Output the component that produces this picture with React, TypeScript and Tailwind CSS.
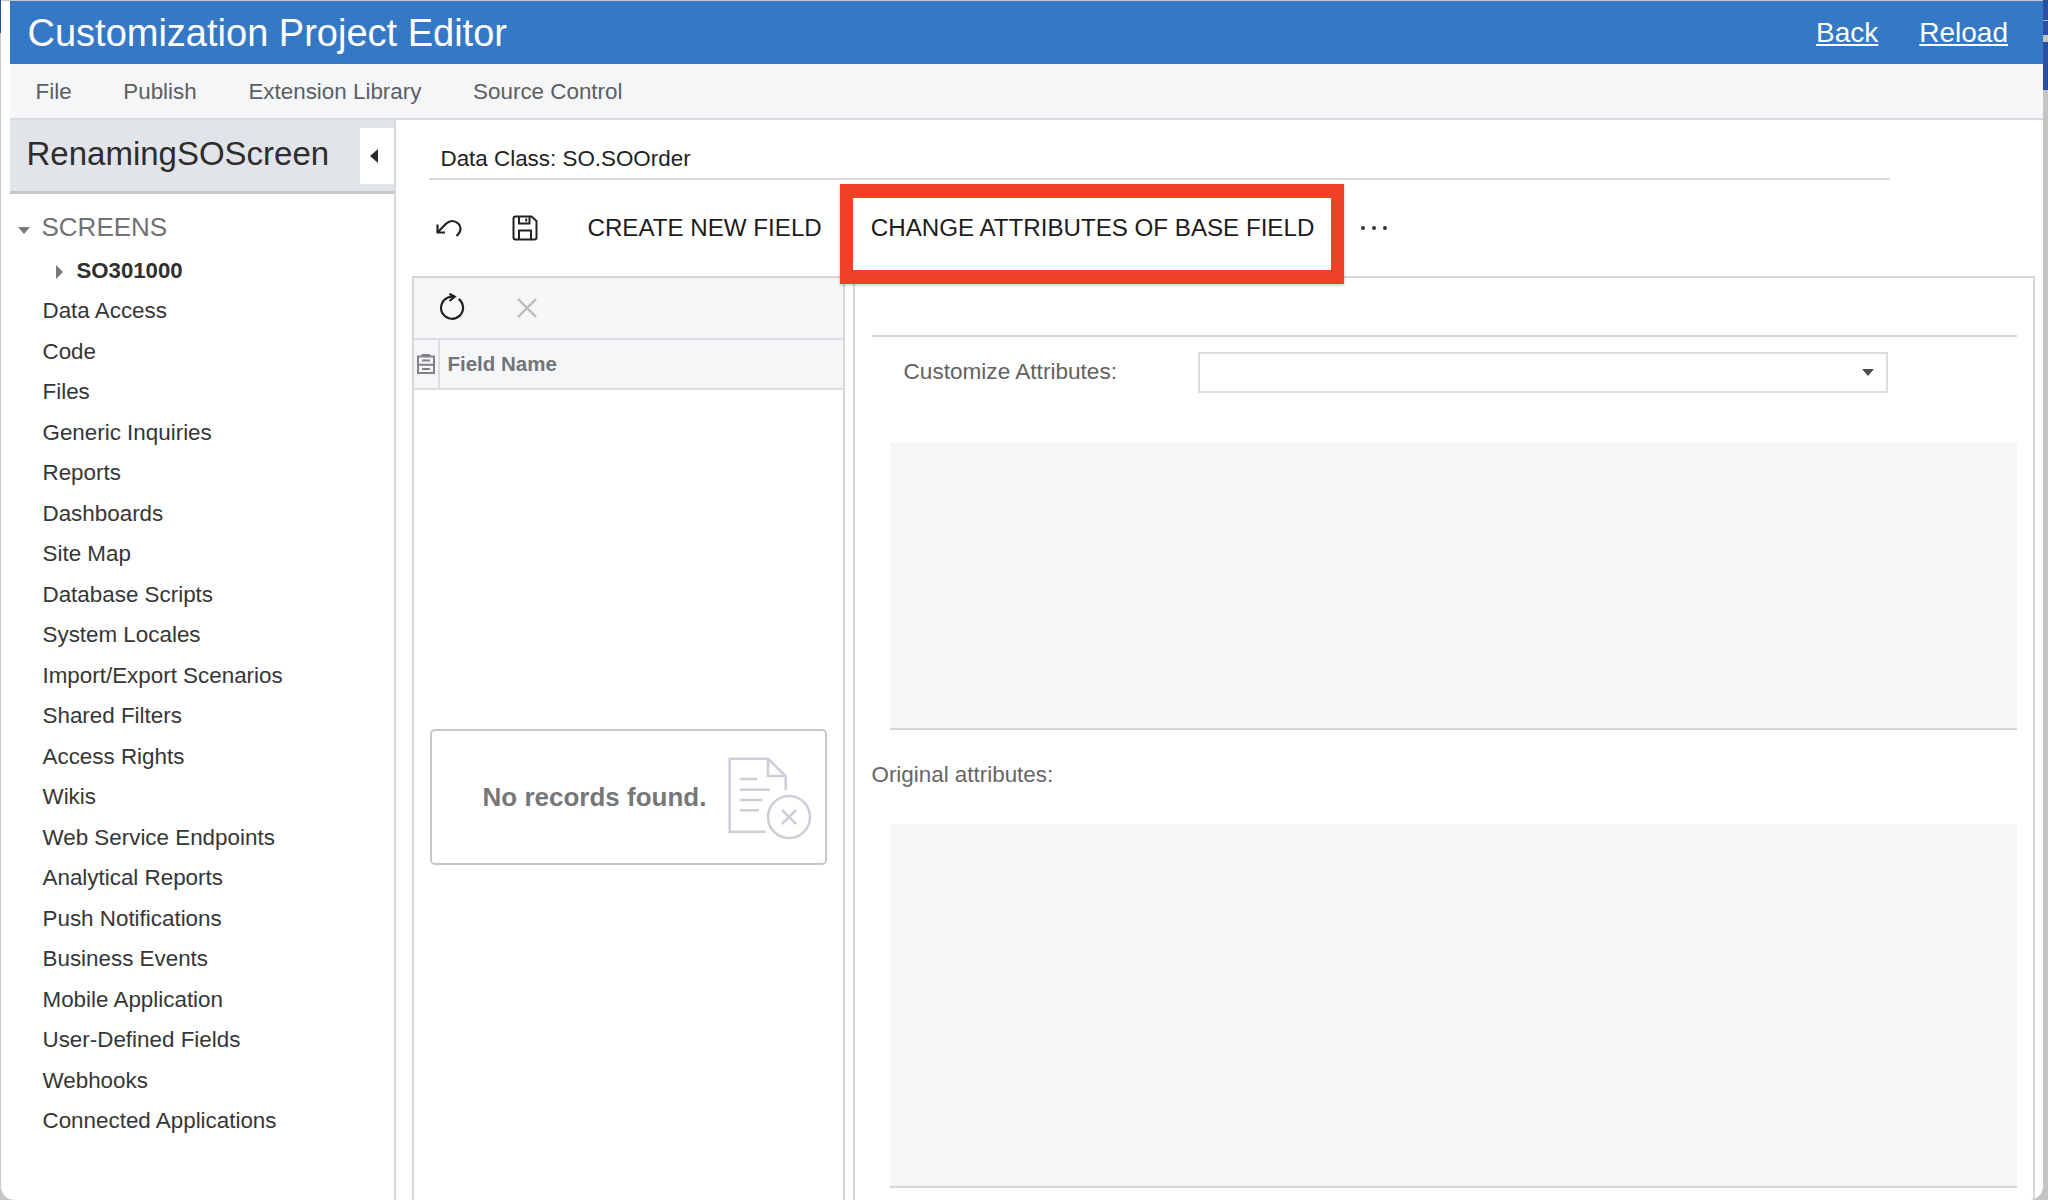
const FONT = "font-['Liberation_Sans',Arial,sans-serif]";

const sideItems = [
  "Data Access",
  "Code",
  "Files",
  "Generic Inquiries",
  "Reports",
  "Dashboards",
  "Site Map",
  "Database Scripts",
  "System Locales",
  "Import/Export Scenarios",
  "Shared Filters",
  "Access Rights",
  "Wikis",
  "Web Service Endpoints",
  "Analytical Reports",
  "Push Notifications",
  "Business Events",
  "Mobile Application",
  "User-Defined Fields",
  "Webhooks",
  "Connected Applications",
];

function UndoIcon() {
  return (
    <svg width="28" height="22" viewBox="0 0 28 22" fill="none" stroke="#222222" strokeWidth="2.2">
      <path d="M2.5 7.5V15.5H10" />
      <path d="M2.5 15.5L11 6.8C13 5 15 4 17 4C21.5 4 25.5 7.5 25.5 11.5C25.5 14.5 23.8 17 21.5 19" />
    </svg>
  );
}

function SaveIcon() {
  return (
    <svg width="26" height="26" viewBox="0 0 26 26" fill="none" stroke="#222222" strokeWidth="2">
      <path d="M3.5 1.5H19.5L24.5 6V22.5C24.5 23.6 23.6 24.5 22.5 24.5H3.5C2.4 24.5 1.5 23.6 1.5 22.5V3.5C1.5 2.4 2.4 1.5 3.5 1.5Z" />
      <path d="M7 1.5V8.5H17.5V1.5" />
      <path d="M14.2 3.6V6.4" />
      <path d="M7 24.5V15.5H19V24.5" />
    </svg>
  );
}

function RefreshIcon() {
  return (
    <svg width="26" height="28" viewBox="0 0 26 28" fill="none" stroke="#222222" strokeWidth="2.2">
      <path d="M19.7 6A11 11 0 1 1 8 5C10 4 12.5 3.7 15 3.7" />
      <path d="M10.5 0.8L15.7 3.7L10.5 8" />
    </svg>
  );
}

function ColumnsIcon() {
  return (
    <svg width="18" height="20" viewBox="0 0 18 20" fill="none" stroke="#808285" strokeWidth="2">
      <rect x="1" y="2.5" width="16" height="16.5" />
      <path d="M4.5 1H13" />
      <path d="M1 10.8H17" />
      <path d="M5 6.6H13M5 15H13" />
    </svg>
  );
}

function NoRecordsIcon() {
  return (
    <svg width="88" height="84" viewBox="0 0 88 84" fill="none" stroke="#ccd0d6" strokeWidth="2.6">
      <path d="M38.7 75.7H2.7V2.7H41L58.7 20V34" />
      <path d="M41 2.7V20H58.7" />
      <path d="M12.7 23H30M12.7 33.7H42.7M12.7 44H35.3M12.7 54.3H32" />
      <circle cx="62" cy="61" r="21" />
      <path d="M55 54L69 68M69 54L55 68" />
    </svg>
  );
}

function SidePanel() {
  return (
    <aside className="w-[386px] shrink-0 border-r-2 border-[#d6d7da] flex flex-col">
      <div className="h-[74px] bg-[#e1e4e9] border-b-[3px] border-[#c4c7cb] flex items-center justify-between">
        <span className="ml-[17px] text-[33px] leading-[36px] text-[#2d2d2d] -mt-[4px]">RenamingSOScreen</span>
        <button className="w-[34px] h-[56px] bg-white flex items-center justify-center">
          <span className="w-0 h-0 border-y-[7px] border-y-transparent border-r-[8px] border-r-[#2b2b2b] -ml-[6px]" />
        </button>
      </div>
      <div className="pt-[12px]">
        <div className="flex items-center h-[42px]">
          <span className="ml-[8px] mt-[6px] w-0 h-0 border-x-[6.5px] border-x-transparent border-t-[7px] border-t-[#77797c]" />
          <span className="ml-[12px] text-[26px] leading-[32px] text-[#6f7175]">SCREENS</span>
        </div>
        <div className="mt-[4px] flex items-center h-[38px]">
          <span className="ml-[46px] mt-[2px] w-0 h-0 border-y-[7px] border-y-transparent border-l-[7px] border-l-[#77797c]" />
          <span className="ml-[14px] text-[22.2px] leading-[28px] font-bold text-[#2f2f2f]">SO301000</span>
        </div>
        <ul className="mt-[1px]">
          {sideItems.map((item) => (
            <li key={item} className="h-[40.5px] pl-[33px] flex items-center text-[22.4px] text-[#363636]">
              {item}
            </li>
          ))}
        </ul>
      </div>
    </aside>
  );
}

function FieldsGrid() {
  return (
    <div className="w-[433px] shrink-0 border-x-2 border-t-2 border-[#d6d7da] flex flex-col">
      <div className="h-[62px] bg-[#f5f6f8] border-b-2 border-[#dcdde0] flex items-center">
        <span className="ml-[25px] -mt-[2px] flex"><RefreshIcon /></span>
        <svg className="ml-[51px]" width="22" height="22" viewBox="0 0 22 22" fill="none" stroke="#b9babc" strokeWidth="2.4">
          <path d="M2 2L20 20M20 2L2 20" />
        </svg>
      </div>
      <div className="h-[50px] bg-[#f5f6f8] border-b-2 border-[#dcdde0] flex items-stretch">
        <div className="w-[26px] border-r-2 border-[#dcdde0] flex items-center justify-center">
          <ColumnsIcon />
        </div>
        <span className="ml-[8px] self-center text-[20.5px] font-bold text-[#737477]">Field Name</span>
      </div>
      <div className="flex-1 px-[16px] pt-[339px]">
        <div className="h-[136px] w-[397px] border-2 border-[#c6c7c9] rounded-[5px] flex items-center">
          <span className="ml-[51px] text-[26px] font-bold text-[#777777]">No records found.</span>
          <span className="ml-[21px] mt-[2px] flex"><NoRecordsIcon /></span>
        </div>
      </div>
    </div>
  );
}

function AttributesPanel() {
  return (
    <div className="ml-[8px] w-[1182px] shrink-0 border-x-2 border-t-2 border-[#d6d7da]">
      <div className="ml-[17px] mr-[16px] mt-[57px] h-[2px] bg-[#d6d7da]" />
      <div className="mt-[14px] flex items-center h-[42px]">
        <span className="ml-[49px] w-[294px] text-[22.6px] text-[#626262]">Customize Attributes:</span>
        <div className="w-[690px] h-[41px] border-2 border-[#dcdde0] flex items-center justify-end pr-[12px]">
          <span className="w-0 h-0 border-x-[6.5px] border-x-transparent border-t-[7px] border-t-[#4f4f4f]" />
        </div>
      </div>
      <div className="ml-[35px] mr-[16px] mt-[50px] h-[287px] bg-[#f5f6f8] border-b-2 border-[#d5d6da]" />
      <div className="ml-[17px] mt-[27px] h-[36px] flex items-center text-[22.4px] text-[#666666]">Original attributes:</div>
      <div className="ml-[35px] mr-[16px] mt-[31px] h-[364px] bg-[#f5f6f8] border-b-2 border-[#d5d6da]" />
    </div>
  );
}

export default function App() {
  return (
    <div className={`${FONT} relative w-[2048px] h-[1200px] overflow-hidden bg-[#c4c4c4] flex`}>
      <span className="absolute left-0 top-0 w-[1px] h-[33px] bg-[#2a4f9f]" />
      <div className="w-[2043px] h-[1200px] bg-white border-l border-t border-[#c8c8c8] rounded-b-[14px] overflow-hidden pl-[8.5px] flex flex-col">
        <header className="h-[63px] shrink-0 bg-[#3578c6] flex items-center justify-between text-white">
          <h1 className="ml-[18px] text-[38px] leading-[44px] font-normal">Customization Project Editor</h1>
          <div className="flex gap-[41px] mr-[35px] text-[28px] leading-[34px]">
            <a className="underline">Back</a>
            <a className="underline">Reload</a>
          </div>
        </header>
        <nav className="h-[56px] shrink-0 bg-[#f5f6f8] border-b-2 border-[#d9dade] flex items-center gap-[51.7px] pl-[26px] pt-[2px] text-[22.4px] text-[#5b5e62]">
          <span>File</span>
          <span>Publish</span>
          <span>Extension Library</span>
          <span>Source Control</span>
        </nav>
        <div className="flex flex-1 min-h-0">
          <SidePanel />
          <main className="flex-1 min-w-0 flex flex-col">
            <div className="ml-[33px] w-[1461px] h-[60px] shrink-0 border-b-2 border-[#d9dadb] flex items-center pl-[12px] pt-[19px] text-[22.4px] text-[#222222]">
              Data Class: SO.SOOrder
            </div>
            <div className="h-[96px] shrink-0 flex items-center pl-[39px] text-[24.15px] text-[#1c1c1c]">
              <span className="flex"><UndoIcon /></span>
              <span className="flex ml-[49px]"><SaveIcon /></span>
              <span className="ml-[50px] leading-[30px]">CREATE NEW FIELD</span>
              <span className="relative ml-[49px] leading-[30px]">
                CHANGE ATTRIBUTES OF BASE FIELD
                <span className="absolute -left-[31px] -right-[30px] -top-[29px] -bottom-[41px] border-x-[13px] border-y-[14px] border-[#ee4125] shadow-[0_1px_3px_rgba(0,0,0,0.25)]" />
              </span>
              <span className="ml-[47px] flex gap-[7px]">
                <span className="w-[4px] h-[4px] rounded-full bg-[#333333]" />
                <span className="w-[4px] h-[4px] rounded-full bg-[#333333]" />
                <span className="w-[4px] h-[4px] rounded-full bg-[#333333]" />
              </span>
            </div>
            <div className="flex flex-1 min-h-0 ml-[16px]">
              <FieldsGrid />
              <AttributesPanel />
            </div>
          </main>
        </div>
      </div>
      <div className="w-[5px] flex flex-col">
        <div className="h-[20px] bg-[#2a4f9f]" />
        <div className="h-[1px] bg-[#b9bdc9]" />
        <div className="h-[14px] bg-[#2a4f9f]" />
        <div className="h-[7px] bg-[#c2c2c2]" />
        <div className="h-[48px] bg-[#2a4f9f]" />
      </div>
    </div>
  );
}
